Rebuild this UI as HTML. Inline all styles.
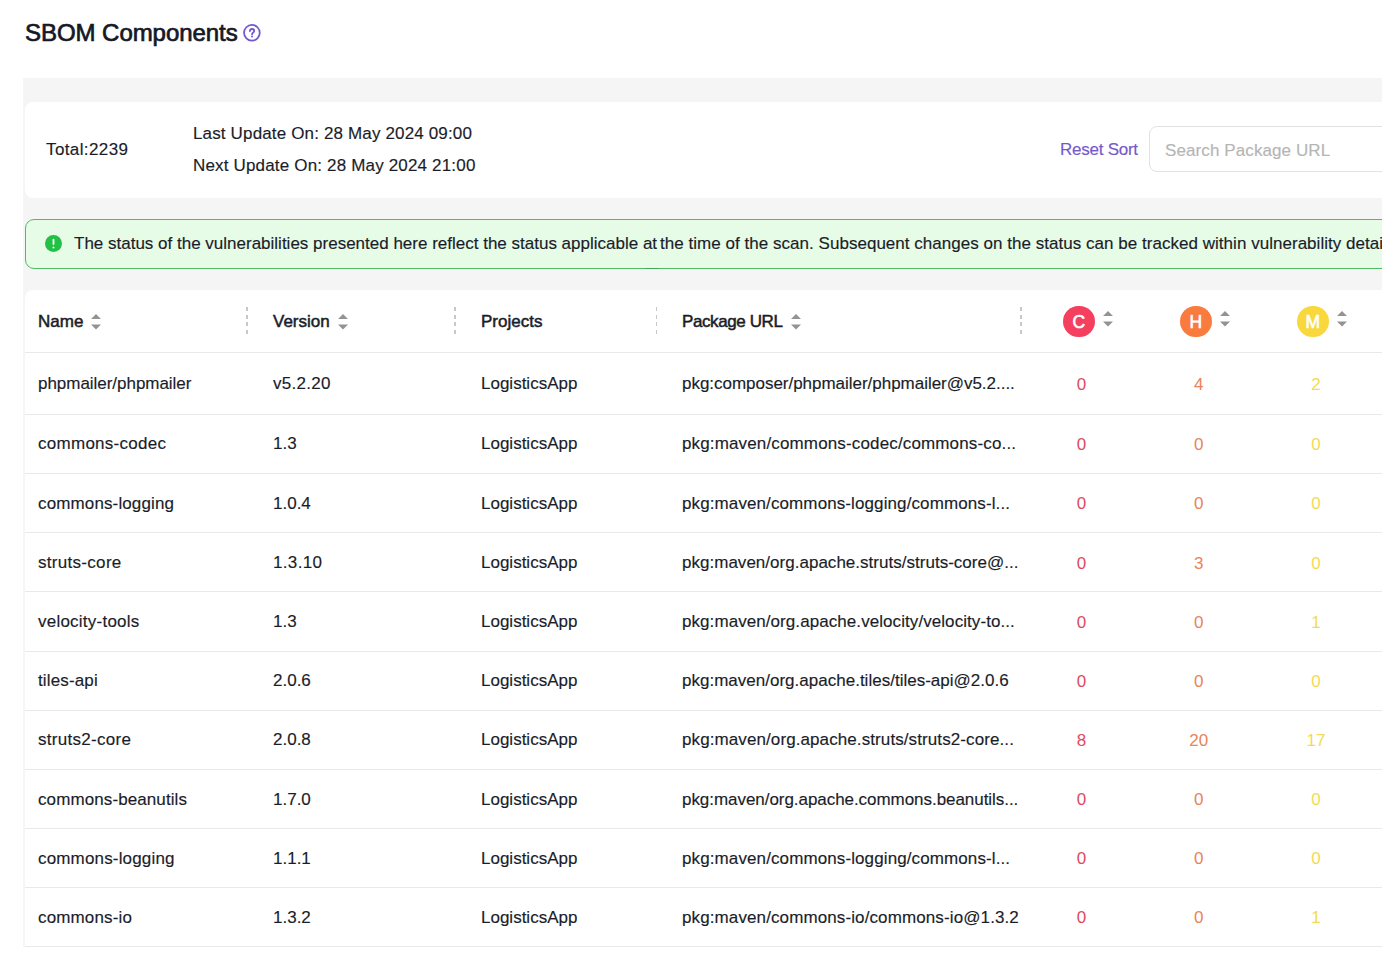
<!DOCTYPE html>
<html><head><meta charset="utf-8">
<style>
*{box-sizing:border-box;margin:0;padding:0}
html,body{width:1400px;height:966px;overflow:hidden;background:#fff}
body{font-family:"Liberation Sans",sans-serif;color:#1a1d29;position:relative}
.abs{position:absolute;white-space:nowrap}
.t{font-size:17px;line-height:20px;-webkit-text-stroke:0.15px currentColor}
#title{left:25px;top:18.8px;font-size:24px;line-height:28px;color:#151826;-webkit-text-stroke:0.7px #151826;letter-spacing:-0.05px}
#help{left:243px;top:23.5px;width:18px;height:18px}
#wrap{position:absolute;left:23px;top:78px;width:1359px;height:869px;background:#f5f5f5;overflow:hidden}
.card{position:absolute;left:2px;right:0;background:#fff;border-radius:8px 0 0 8px}
#c1{top:24px;height:96px}
#alert{position:absolute;left:2px;width:1400px;top:141px;height:50px;background:#e7fce7;border:1.6px solid #50bb63;border-radius:9px}
#tbl{top:212px;height:657px;border-radius:8px 0 0 0}
.sep{position:absolute;left:0;right:0;height:1px;background:#e9e9eb}
.hd{font-size:17px;line-height:20px;font-weight:normal;-webkit-text-stroke:0.5px #1a1d29;color:#1a1d29}
.div{position:absolute;width:1.6px;height:26.5px;background:repeating-linear-gradient(to bottom,#c8c8c8 0,#c8c8c8 4.2px,transparent 4.2px,transparent 7.6px)}
.sort{position:absolute;width:10px;height:16px}
.circ{position:absolute;width:31.5px;height:31.5px;border-radius:50%;color:#fff;font-weight:normal;-webkit-text-stroke:0.6px #fff;font-size:17.5px;line-height:32.5px;text-align:center}
.num{position:absolute;font-size:17px;line-height:20px;text-align:center;width:30px}
.cr{color:#de4a60}.ch{color:#e8835a}.cm{color:#f3da55}
</style></head><body>
<div id="title" class="abs">SBOM Components</div>
<svg id="help" class="abs" viewBox="0 0 18 18"><circle cx="8.9" cy="8.8" r="7.85" fill="none" stroke="#7257cf" stroke-width="1.75"/><path d="M6.9 7.0 C6.9 5.6 7.9 5.0 9.05 5.0 C10.3 5.0 11.2 5.8 11.2 6.9 C11.2 8.0 10.4 8.4 9.7 8.9 C9.2 9.25 9.05 9.6 9.05 10.3" fill="none" stroke="#7257cf" stroke-width="1.8" stroke-linecap="round"/><circle cx="9.05" cy="12.45" r="1" fill="#7257cf"/></svg>

<div id="wrap">
  <div class="card" id="c1">
    <div class="abs t" style="left:21px;top:38px;letter-spacing:0.39px">Total:2239</div>
    <div class="abs t" style="left:168px;top:22px;letter-spacing:0.15px">Last Update On: 28 May 2024 09:00</div>
    <div class="abs t" style="left:168px;top:54px;letter-spacing:0.17px">Next Update On: 28 May 2024 21:00</div>
    <div class="abs t" style="left:1035px;top:38px;color:#7459cc;letter-spacing:-0.25px">Reset Sort</div>
    <div class="abs" style="left:1124px;top:24px;width:300px;height:46px;border:1px solid #e2e2e5;border-radius:8px"></div>
    <div class="abs t" style="left:1140px;top:38.5px;color:#b5b5b5;letter-spacing:0.1px">Search Package URL</div>
  </div>
  <div id="alert">
    <svg class="abs" style="left:19px;top:15px" width="17" height="17" viewBox="0 0 17 17"><circle cx="8.5" cy="8.5" r="8.5" fill="#22c045"/><rect x="7.6" y="3.8" width="1.8" height="6.2" rx="0.9" fill="#fff"/><circle cx="8.5" cy="12.6" r="1" fill="#fff"/></svg>
    <div class="abs t" style="left:48px;top:13.8px">The status of the vulnerabilities presented here reflect the status applicable at<span style="margin-left:3px;letter-spacing:0.03px">the time of the scan. Subsequent changes on the status can be tracked within vulnerability details.</span></div>
  </div>
  <div class="abs" style="left:622px;top:190px;width:14px;height:1.3px;background:#3fa85c;border-radius:1px"></div>
  <div class="card" id="tbl">
    <!-- header -->
    <div class="abs hd" style="left:13px;top:21.7px">Name</div>
    <div class="abs hd" style="left:248px;top:21.7px">Version</div>
    <div class="abs hd" style="left:456px;top:21.7px">Projects</div>
    <div class="abs hd" style="left:657px;top:21.7px;letter-spacing:-0.4px">Package URL</div>
    <div class="div" style="left:221.2px;top:17.4px"></div>
    <div class="div" style="left:429.2px;top:17.4px"></div>
    <div class="div" style="left:630.8px;top:17.4px"></div>
    <div class="div" style="left:995.2px;top:17.4px"></div>
    <div class="circ" style="left:1038px;top:15.5px;background:#f43f5e">C</div>
    <div class="circ" style="left:1155px;top:15.5px;background:#f97b3d">H</div>
    <div class="circ" style="left:1272px;top:15.5px;background:#f9d83e">M</div>
    <div class="sep" style="top:62.3px"></div>
    <svg class="sort" style="left:66.2px;top:23.69999999999999px" viewBox="0 0 10 16"><path d="M5 0 L10 5 L0 5 Z M5 15.5 L10 10.5 L0 10.5 Z" fill="#939393"/></svg>
<svg class="sort" style="left:313.2px;top:23.69999999999999px" viewBox="0 0 10 16"><path d="M5 0 L10 5 L0 5 Z M5 15.5 L10 10.5 L0 10.5 Z" fill="#939393"/></svg>
<svg class="sort" style="left:766.2px;top:23.69999999999999px" viewBox="0 0 10 16"><path d="M5 0 L10 5 L0 5 Z M5 15.5 L10 10.5 L0 10.5 Z" fill="#939393"/></svg>
<svg class="sort" style="left:1077.8px;top:21.19999999999999px" viewBox="0 0 10 16"><path d="M5 0 L10 5 L0 5 Z M5 15.5 L10 10.5 L0 10.5 Z" fill="#939393"/></svg>
<svg class="sort" style="left:1194.5px;top:21.19999999999999px" viewBox="0 0 10 16"><path d="M5 0 L10 5 L0 5 Z M5 15.5 L10 10.5 L0 10.5 Z" fill="#939393"/></svg>
<svg class="sort" style="left:1312px;top:21.19999999999999px" viewBox="0 0 10 16"><path d="M5 0 L10 5 L0 5 Z M5 15.5 L10 10.5 L0 10.5 Z" fill="#939393"/></svg>
<div class="sep" style="top:123.7px"></div>
<div class="sep" style="top:182.9px"></div>
<div class="sep" style="top:242.1px"></div>
<div class="sep" style="top:301.3px"></div>
<div class="sep" style="top:360.5px"></div>
<div class="sep" style="top:419.7px"></div>
<div class="sep" style="top:478.9px"></div>
<div class="sep" style="top:538.1px"></div>
<div class="sep" style="top:597.1px"></div>
<div class="sep" style="top:656.1px"></div>
<div class="abs t" style="left:13px;top:84.0px;letter-spacing:-0.033px">phpmailer/phpmailer</div>
<div class="abs t" style="left:248px;top:84.0px;letter-spacing:0.28px">v5.2.20</div>
<div class="abs t" style="left:456px;top:84.0px">LogisticsApp</div>
<div class="abs t" style="left:657px;top:84.0px;letter-spacing:-0.025px">pkg:composer/phpmailer/phpmailer@v5.2....</div>
<div class="num cr" style="left:1041.5px;top:84.8px">0</div>
<div class="num ch" style="left:1158.8px;top:84.8px">4</div>
<div class="num cm" style="left:1276px;top:84.8px">2</div>
<div class="abs t" style="left:13px;top:144.3px;letter-spacing:0.275px">commons-codec</div>
<div class="abs t" style="left:248px;top:144.3px;letter-spacing:0px">1.3</div>
<div class="abs t" style="left:456px;top:144.3px">LogisticsApp</div>
<div class="abs t" style="left:657px;top:144.3px;letter-spacing:0.144px">pkg:maven/commons-codec/commons-co...</div>
<div class="num cr" style="left:1041.5px;top:145.1px">0</div>
<div class="num ch" style="left:1158.8px;top:145.1px">0</div>
<div class="num cm" style="left:1276px;top:145.1px">0</div>
<div class="abs t" style="left:13px;top:203.5px;letter-spacing:0.129px">commons-logging</div>
<div class="abs t" style="left:248px;top:203.5px;letter-spacing:0px">1.0.4</div>
<div class="abs t" style="left:456px;top:203.5px">LogisticsApp</div>
<div class="abs t" style="left:657px;top:203.5px;letter-spacing:0.105px">pkg:maven/commons-logging/commons-l...</div>
<div class="num cr" style="left:1041.5px;top:204.3px">0</div>
<div class="num ch" style="left:1158.8px;top:204.3px">0</div>
<div class="num cm" style="left:1276px;top:204.3px">0</div>
<div class="abs t" style="left:13px;top:262.7px;letter-spacing:0.3px">struts-core</div>
<div class="abs t" style="left:248px;top:262.7px;letter-spacing:0.34px">1.3.10</div>
<div class="abs t" style="left:456px;top:262.7px">LogisticsApp</div>
<div class="abs t" style="left:657px;top:262.7px;letter-spacing:0.019px">pkg:maven/org.apache.struts/struts-core@...</div>
<div class="num cr" style="left:1041.5px;top:263.5px">0</div>
<div class="num ch" style="left:1158.8px;top:263.5px">3</div>
<div class="num cm" style="left:1276px;top:263.5px">0</div>
<div class="abs t" style="left:13px;top:321.9px;letter-spacing:0.231px">velocity-tools</div>
<div class="abs t" style="left:248px;top:321.9px;letter-spacing:0px">1.3</div>
<div class="abs t" style="left:456px;top:321.9px">LogisticsApp</div>
<div class="abs t" style="left:657px;top:321.9px;letter-spacing:0.07px">pkg:maven/org.apache.velocity/velocity-to...</div>
<div class="num cr" style="left:1041.5px;top:322.7px">0</div>
<div class="num ch" style="left:1158.8px;top:322.7px">0</div>
<div class="num cm" style="left:1276px;top:322.7px">1</div>
<div class="abs t" style="left:13px;top:381.1px;letter-spacing:0.138px">tiles-api</div>
<div class="abs t" style="left:248px;top:381.1px;letter-spacing:0px">2.0.6</div>
<div class="abs t" style="left:456px;top:381.1px">LogisticsApp</div>
<div class="abs t" style="left:657px;top:381.1px;letter-spacing:0.01px">pkg:maven/org.apache.tiles/tiles-api@2.0.6</div>
<div class="num cr" style="left:1041.5px;top:381.9px">0</div>
<div class="num ch" style="left:1158.8px;top:381.9px">0</div>
<div class="num cm" style="left:1276px;top:381.9px">0</div>
<div class="abs t" style="left:13px;top:440.3px;letter-spacing:0.291px">struts2-core</div>
<div class="abs t" style="left:248px;top:440.3px;letter-spacing:0px">2.0.8</div>
<div class="abs t" style="left:456px;top:440.3px">LogisticsApp</div>
<div class="abs t" style="left:657px;top:440.3px;letter-spacing:0.095px">pkg:maven/org.apache.struts/struts2-core...</div>
<div class="num cr" style="left:1041.5px;top:441.1px">8</div>
<div class="num ch" style="left:1158.8px;top:441.1px">20</div>
<div class="num cm" style="left:1276px;top:441.1px">17</div>
<div class="abs t" style="left:13px;top:499.5px;letter-spacing:0.1px">commons-beanutils</div>
<div class="abs t" style="left:248px;top:499.5px;letter-spacing:0px">1.7.0</div>
<div class="abs t" style="left:456px;top:499.5px">LogisticsApp</div>
<div class="abs t" style="left:657px;top:499.5px;letter-spacing:-0.05px">pkg:maven/org.apache.commons.beanutils...</div>
<div class="num cr" style="left:1041.5px;top:500.3px">0</div>
<div class="num ch" style="left:1158.8px;top:500.3px">0</div>
<div class="num cm" style="left:1276px;top:500.3px">0</div>
<div class="abs t" style="left:13px;top:558.6px;letter-spacing:0.164px">commons-logging</div>
<div class="abs t" style="left:248px;top:558.6px;letter-spacing:0px">1.1.1</div>
<div class="abs t" style="left:456px;top:558.6px">LogisticsApp</div>
<div class="abs t" style="left:657px;top:558.6px;letter-spacing:0.108px">pkg:maven/commons-logging/commons-l...</div>
<div class="num cr" style="left:1041.5px;top:559.4px">0</div>
<div class="num ch" style="left:1158.8px;top:559.4px">0</div>
<div class="num cm" style="left:1276px;top:559.4px">0</div>
<div class="abs t" style="left:13px;top:617.6px;letter-spacing:0.144px">commons-io</div>
<div class="abs t" style="left:248px;top:617.6px;letter-spacing:0px">1.3.2</div>
<div class="abs t" style="left:456px;top:617.6px">LogisticsApp</div>
<div class="abs t" style="left:657px;top:617.6px;letter-spacing:0.111px">pkg:maven/commons-io/commons-io@1.3.2</div>
<div class="num cr" style="left:1041.5px;top:618.4px">0</div>
<div class="num ch" style="left:1158.8px;top:618.4px">0</div>
<div class="num cm" style="left:1276px;top:618.4px">1</div>
  </div>
</div>
</body></html>
